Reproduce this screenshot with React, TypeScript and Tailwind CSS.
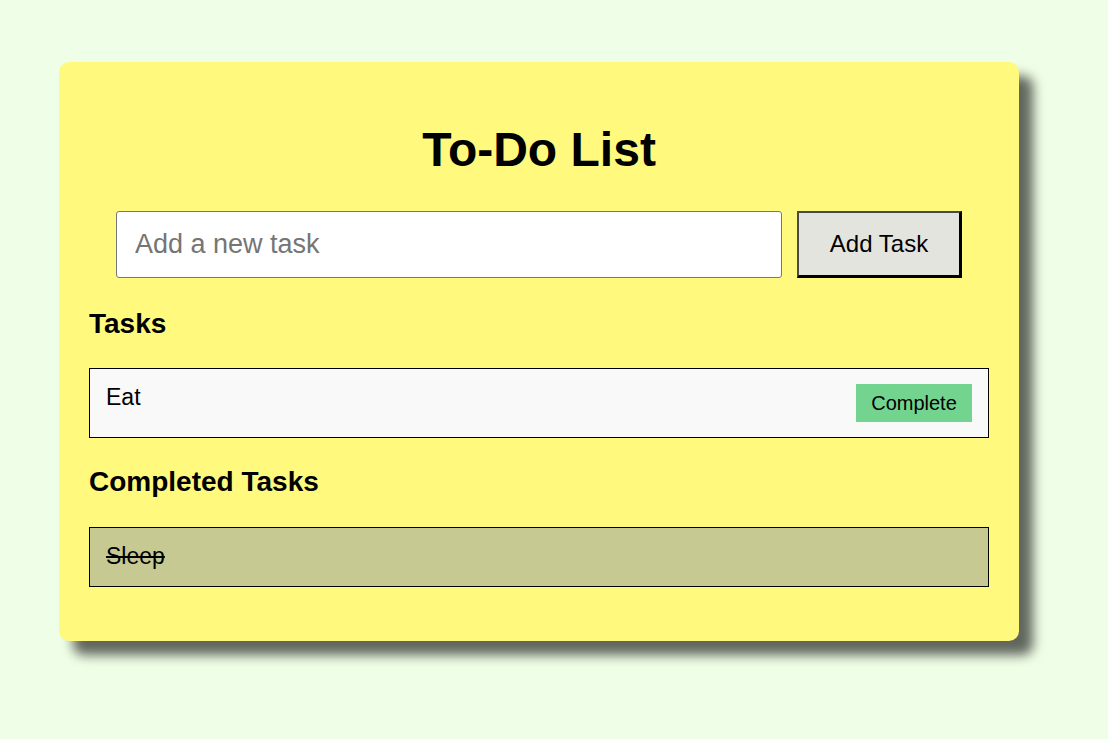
import { useState } from "react"

type Task = { id: number; text: string }

export default function App() {
  const [tasks] = useState<Task[]>([{ id: 1, text: "Eat" }])
  const [done] = useState<Task[]>([{ id: 2, text: "Sleep" }])

  return (
    <div className="min-h-[739px] bg-[#effee6] pt-[62px] pl-[59px] font-['Liberation_Sans',Arial,sans-serif] text-black">
      <div className="w-[960px] rounded-[10px] bg-[#fff97d] px-[30px] pt-[61px] pb-[54px] shadow-[14px_14px_12px_rgba(0,0,0,0.6)]">
        <h1 className="text-center text-[48px] font-bold leading-[54px]">To-Do List</h1>

        <div className="mt-[34px] flex justify-center gap-[15px]">
          <input
            type="text"
            placeholder="Add a new task"
            className="h-[67px] w-[666px] rounded-[3px] border border-[#777] bg-white px-[18px] text-[27px] placeholder:text-[#757575] outline-none"
          />
          <button className="h-[67px] w-[165px] border-t-2 border-l-2 border-r-[3px] border-b-[3px] border-t-[#4a4a4a] border-l-[#4a4a4a] border-r-black border-b-black bg-[#e4e4df] text-[24px]">
            Add Task
          </button>
        </div>

        <h2 className="mt-[30px] text-[28px] font-bold leading-[31px]">Tasks</h2>
        <ul className="mt-[29px]">
          {tasks.map((t) => (
            <li key={t.id} className="flex justify-between border border-black bg-[#f8f9f8] px-[16px] py-[15px]">
              <span className="text-[23px] leading-[26px]">{t.text}</span>
              <button className="h-[38px] w-[116px] bg-[#72d48e] text-[20px]">Complete</button>
            </li>
          ))}
        </ul>

        <h2 className="mt-[28px] text-[28px] font-bold leading-[31px]">Completed Tasks</h2>
        <ul className="mt-[30px]">
          {done.map((t) => (
            <li key={t.id} className="border border-black bg-[#c7c993] px-[16px] py-[15px]">
              <span className="text-[23px] leading-[27px] line-through">{t.text}</span>
            </li>
          ))}
        </ul>
      </div>
    </div>
  )
}
